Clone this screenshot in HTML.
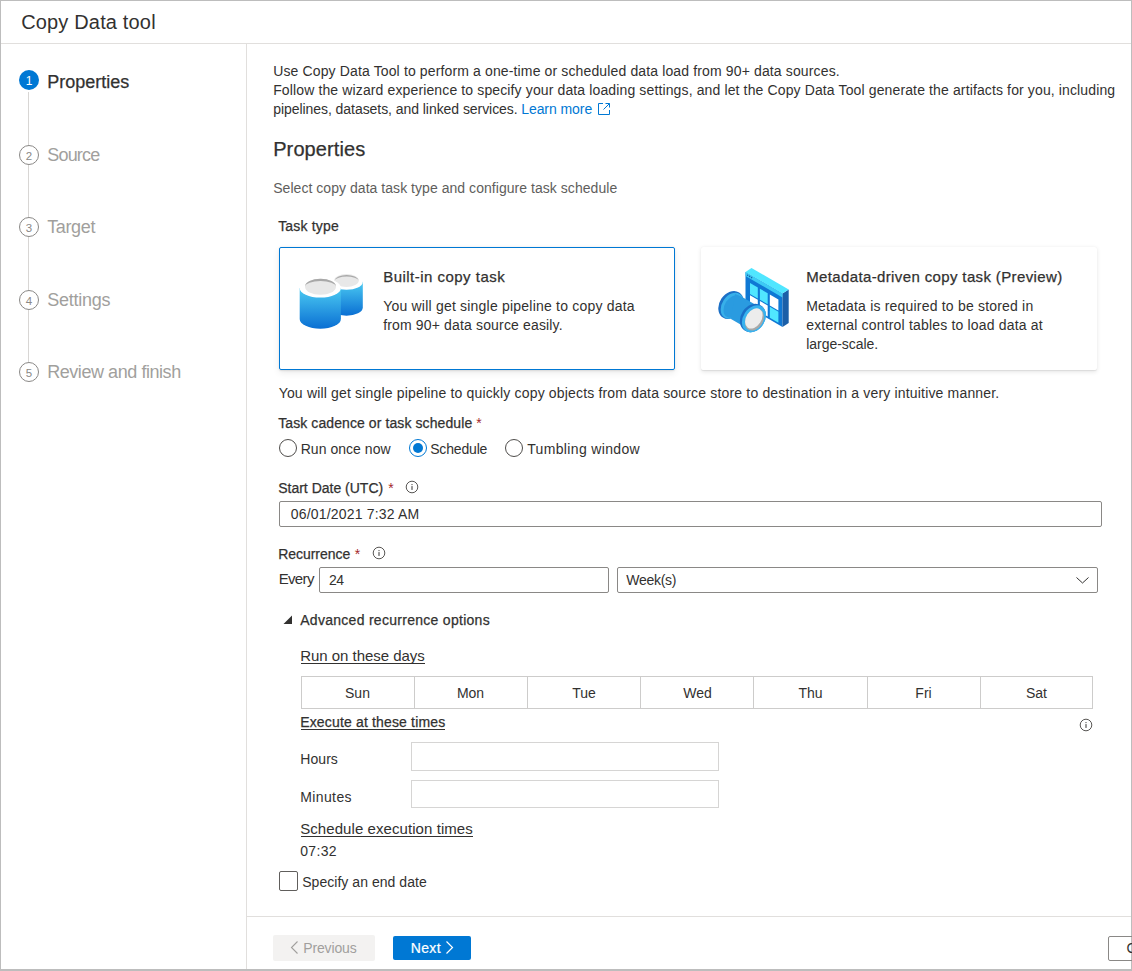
<!DOCTYPE html>
<html><head><meta charset="utf-8">
<style>
html,body{margin:0;padding:0;}
body{width:1132px;height:971px;position:relative;overflow:hidden;background:#fff;font-family:"Liberation Sans",sans-serif;color:#323130;}
.t{position:absolute;white-space:nowrap;line-height:1;}
.abs{position:absolute;box-sizing:border-box;}
.day{position:absolute;top:676px;height:33px;box-sizing:border-box;display:flex;align-items:center;justify-content:center;font-size:14px;color:#323130;}
</style></head><body>
<!-- frame -->
<div class="abs" style="left:0;top:0;width:1px;height:971px;background:#bdbdbd"></div>
<div class="abs" style="left:0;top:0;width:1132px;height:1px;background:#bdbdbd"></div>
<div class="abs" style="left:1131px;top:0;width:1px;height:971px;background:#bdbdbd"></div>
<div class="abs" style="left:0;top:969px;width:1132px;height:2px;background:#bdbdbd"></div>
<!-- header border -->
<div class="abs" style="left:1px;top:43px;width:1130px;height:1px;background:#e1dfdd"></div>
<!-- nav divider -->
<div class="abs" style="left:246px;top:44px;width:1px;height:925px;background:#e1dfdd"></div>
<!-- nav steps -->
<div class="abs" style="left:28px;top:92px;width:1px;height:270px;background:#d8d6d4"></div>
<div class="abs" style="left:19px;top:70px;width:20px;height:20px;border-radius:50%;background:#0078d4;color:#fff;font-size:12px;line-height:22px;text-align:center">1</div>
<div class="abs" style="left:19px;top:145px;width:20px;height:20px;border-radius:50%;background:#fff;border:1px solid #8a8886;color:#8a8886;font-size:11.5px;line-height:21px;text-align:center">2</div>
<div class="abs" style="left:19px;top:217px;width:20px;height:20px;border-radius:50%;background:#fff;border:1px solid #8a8886;color:#8a8886;font-size:11.5px;line-height:21px;text-align:center">3</div>
<div class="abs" style="left:19px;top:290px;width:20px;height:20px;border-radius:50%;background:#fff;border:1px solid #8a8886;color:#8a8886;font-size:11.5px;line-height:21px;text-align:center">4</div>
<div class="abs" style="left:19px;top:362px;width:20px;height:20px;border-radius:50%;background:#fff;border:1px solid #8a8886;color:#8a8886;font-size:11.5px;line-height:21px;text-align:center">5</div>

<!-- learn more icon -->
<svg class="abs" style="left:597px;top:102px" width="14" height="14" viewBox="0 0 14 14"><path d="M6 1.5H1.5V12.5H12.5V8" fill="none" stroke="#0078d4" stroke-width="1"/><path d="M8.5 1.5H12.5V5.5M12.5 1.5L6.5 7.5" fill="none" stroke="#0078d4" stroke-width="1"/></svg>

<!-- cards -->
<div class="abs" style="left:279px;top:247px;width:396px;height:123px;border:1px solid #0078d4;border-radius:2px;box-shadow:0 0.6px 1.8px rgba(0,0,0,.10),0 3px 7px rgba(0,0,0,.08)"></div>
<div class="abs" style="left:701px;top:247px;width:396px;height:123px;border-radius:2px;box-shadow:0 0.3px 0.9px rgba(0,0,0,.07),0 1.6px 4px rgba(0,0,0,.10)"></div>
<svg class="abs" style="left:296px;top:270px" width="70" height="62" viewBox="0 0 70 62">
<defs><linearGradient id="cg" x1="0" y1="0" x2="0" y2="1"><stop offset="0" stop-color="#4ccbf2"/><stop offset="1" stop-color="#0a6fd3"/></linearGradient>
<linearGradient id="cg2" x1="0" y1="0" x2="0" y2="1"><stop offset="0" stop-color="#4ccbf2"/><stop offset="1" stop-color="#0a6fd3"/></linearGradient></defs>
<path d="M34.2 11.65 V37.5 A16.3 8.15 0 0 0 66.8 37.5 V11.65 Z" fill="url(#cg2)"/>
<ellipse cx="50.5" cy="11.65" rx="16.3" ry="8.15" fill="#fff"/>
<ellipse cx="50.5" cy="10.5" rx="12.3" ry="6.5" fill="#e8e8e8"/>
<path d="M38.5 10.5 A12.3 6.5 0 0 1 62.8 10.5 A12.3 4.6 0 0 0 38.5 10.5 Z" fill="#a8a8a8"/>
<path d="M3.7 17.9 V49 A20.6 9.7 0 0 0 44.9 49 V17.9 Z" fill="url(#cg)"/>
<ellipse cx="24.3" cy="17.9" rx="20.6" ry="9.7" fill="#fff"/>
<ellipse cx="24.5" cy="16.75" rx="15.5" ry="8.1" fill="#e8e8e8"/>
<path d="M9 16.75 A15.5 8.1 0 0 1 40 16.75 A15.5 5.8 0 0 0 9 16.75 Z" fill="#a8a8a8"/>
</svg>
<svg class="abs" style="left:716px;top:264px" width="76" height="72" viewBox="0 0 76 72">
<path d="M29.5 8 L66.5 29.5 L66.5 63 L29.5 41.5 Z" fill="#0f78d4"/>
<path d="M66.5 29.5 L72.7 25.5 L72.7 59 L66.5 63 Z" fill="#1b5fa8"/>
<path d="M29.5 8 L35.5 4 L72.7 25.5 L66.5 29.5 Z" fill="#50e6ff"/>
<path d="M29.5 8 L66.5 29.5 L66.5 33.5 L29.5 12 Z" fill="#3ccaf4"/>
<circle cx="31.6" cy="11.2" r="0.8" fill="#1b5fa8"/><circle cx="33.6" cy="12.4" r="0.8" fill="#1b5fa8"/><circle cx="35.6" cy="13.6" r="0.8" fill="#1b5fa8"/>
<path d="M34 19 L41.8 23.5 L41.8 34.5 L34 30 Z" fill="#50e6ff"/>
<path d="M43.9 24.7 L51.7 29.2 L51.7 40.2 L43.9 35.7 Z" fill="#50e6ff"/>
<path d="M53.8 30.4 L62.4 35.4 L62.4 46.4 L53.8 41.4 Z" fill="#ffffff"/>
<path d="M34 31.3 L41.8 35.8 L41.8 46.8 L34 42.3 Z" fill="#ffffff"/>
<path d="M43.9 37 L51.7 41.5 L51.7 52.5 L43.9 48 Z" fill="#ffffff"/>
<path d="M53.8 42.7 L62.4 47.7 L62.4 58.7 L53.8 53.7 Z" fill="#50e6ff"/>
<g transform="rotate(33 15 41)"><ellipse cx="15" cy="41" rx="11.6" ry="15" fill="#1b6fc6"/><ellipse cx="16.4" cy="41" rx="10.2" ry="14" fill="#38b0ea"/><ellipse cx="17.6" cy="41" rx="8.4" ry="12.2" fill="#2a9be0"/></g>
<path d="M19 30 L27 33.6 L40 41 L35 67 L25.8 61.2 L15 55 Z" fill="#2a9be0"/>
<g transform="rotate(33 36.8 54)"><ellipse cx="36.8" cy="54" rx="12" ry="15" fill="#1b6fc6"/><ellipse cx="38.2" cy="54" rx="10.8" ry="14.6" fill="#38b2ee"/><ellipse cx="39.2" cy="54.6" rx="8.4" ry="11.6" fill="#a8a8a8"/><ellipse cx="37.9" cy="53.8" rx="7.6" ry="11" fill="#ececec"/></g>
</svg>

<!-- radios -->
<div class="abs" style="left:279px;top:439px;width:18px;height:18px;border-radius:50%;border:1px solid #4f4d4b"></div>
<div class="abs" style="left:408.5px;top:439px;width:18px;height:18px;border-radius:50%;border:1px solid #0078d4"></div>
<div class="abs" style="left:412.5px;top:443px;width:10px;height:10px;border-radius:50%;background:#0078d4"></div>
<div class="abs" style="left:505px;top:439px;width:18px;height:18px;border-radius:50%;border:1px solid #4f4d4b"></div>

<!-- info icons -->
<svg class="abs" style="left:405px;top:480px" width="14" height="14" viewBox="0 0 14 14"><circle cx="7" cy="7" r="5.8" fill="none" stroke="#4f4d4b" stroke-width="0.95"/><path d="M7 6.1v3.8" stroke="#323130" stroke-width="1"/><circle cx="7" cy="4.6" r="0.6" fill="#323130"/></svg>
<svg class="abs" style="left:372px;top:546px" width="14" height="14" viewBox="0 0 14 14"><circle cx="7" cy="7" r="5.8" fill="none" stroke="#4f4d4b" stroke-width="0.95"/><path d="M7 6.1v3.8" stroke="#323130" stroke-width="1"/><circle cx="7" cy="4.6" r="0.6" fill="#323130"/></svg>
<svg class="abs" style="left:1078.5px;top:718px" width="14" height="14" viewBox="0 0 14 14"><circle cx="7" cy="7" r="5.8" fill="none" stroke="#4f4d4b" stroke-width="0.95"/><path d="M7 6.1v3.8" stroke="#323130" stroke-width="1"/><circle cx="7" cy="4.6" r="0.6" fill="#323130"/></svg>

<!-- inputs -->
<div class="abs" style="left:279px;top:501px;width:823px;height:26px;border:1px solid #8a8886;border-radius:2px"></div>
<div class="abs" style="left:319px;top:567px;width:290px;height:26px;border:1px solid #8a8886;border-radius:2px"></div>
<div class="abs" style="left:617px;top:567px;width:481px;height:26px;border:1px solid #8a8886;border-radius:2px"></div>
<svg class="abs" style="left:1075px;top:575px" width="16" height="10" viewBox="0 0 16 10"><path d="M1.5 2.5 L7.5 8 L13.5 2.5" fill="none" stroke="#323130" stroke-width="1"/></svg>
<!-- triangle -->
<svg class="abs" style="left:283px;top:615px" width="10" height="10" viewBox="0 0 10 10"><path d="M0.5 9 L9 0.5 L9 9 Z" fill="#323130"/></svg>
<!-- underlines -->
<div class="abs" style="left:301px;top:663px;width:124px;height:1px;background:#323130"></div>
<div class="abs" style="left:301px;top:729px;width:144px;height:1px;background:#323130"></div>
<div class="abs" style="left:301px;top:836px;width:172px;height:1px;background:#323130"></div>
<!-- days table -->
<div class="abs" style="left:301px;top:676px;width:792px;height:33px;border:1px solid #cdcccb"></div>
<div class="abs" style="left:414px;top:676px;width:1px;height:33px;background:#cdcccb"></div>
<div class="abs" style="left:527px;top:676px;width:1px;height:33px;background:#cdcccb"></div>
<div class="abs" style="left:640px;top:676px;width:1px;height:33px;background:#cdcccb"></div>
<div class="abs" style="left:753px;top:676px;width:1px;height:33px;background:#cdcccb"></div>
<div class="abs" style="left:867px;top:676px;width:1px;height:33px;background:#cdcccb"></div>
<div class="abs" style="left:980px;top:676px;width:1px;height:33px;background:#cdcccb"></div>
<div class="day" style="left:301px;width:113px"><span>Sun</span></div><div class="day" style="left:414px;width:113px"><span>Mon</span></div><div class="day" style="left:527px;width:114px"><span>Tue</span></div><div class="day" style="left:641px;width:113px"><span>Wed</span></div><div class="day" style="left:754px;width:113px"><span>Thu</span></div><div class="day" style="left:867px;width:113px"><span>Fri</span></div><div class="day" style="left:980px;width:113px"><span>Sat</span></div>
<!-- hours/minutes inputs -->
<div class="abs" style="left:411px;top:742px;width:308px;height:29px;border:1px solid #d6d5d4"></div>
<div class="abs" style="left:411px;top:780px;width:308px;height:28px;border:1px solid #d6d5d4"></div>
<!-- checkbox -->
<div class="abs" style="left:279px;top:871px;width:19px;height:20px;border:1px solid #605e5c;border-radius:2px"></div>
<!-- footer -->
<div class="abs" style="left:247px;top:916px;width:884px;height:1px;background:#e1dfdd"></div>
<div class="abs" style="left:273px;top:935px;width:102px;height:26px;background:#f3f2f1;border-radius:2px"></div>
<svg class="abs" style="left:289px;top:940px" width="12" height="16" viewBox="0 0 12 16"><path d="M8.5 1.5 L2.5 7.5 L8.5 13.5" fill="none" stroke="#a19f9d" stroke-width="1.1"/></svg>
<div class="abs" style="left:393px;top:936px;width:78px;height:24px;background:#0078d4;border-radius:2px"></div>
<svg class="abs" style="left:444px;top:940px" width="12" height="16" viewBox="0 0 12 16"><path d="M2.5 1.5 L8.5 7.5 L2.5 13.5" fill="none" stroke="#fff" stroke-width="1.2"/></svg>
<div class="abs" style="left:1108px;top:936px;width:40px;height:25px;border:1px solid #8a8886;border-radius:2px"></div>
<div class="t" style="left:1126.5px;top:940.5px;font-size:14px;">C</div>
<div class="t" style="left:21.2px;top:12.07px;font-size:20px;font-weight:400;color:#323130;letter-spacing:0.162px;">Copy Data tool</div>
<div class="t" style="left:47.2px;top:72.76px;font-size:18px;-webkit-text-stroke:0.25px #323130;color:#323130;letter-spacing:-0.005px;">Properties</div>
<div class="t" style="left:47.2px;top:145.76px;font-size:18px;font-weight:400;color:#a19f9d;letter-spacing:-0.789px;">Source</div>
<div class="t" style="left:47.2px;top:217.76px;font-size:18px;font-weight:400;color:#a19f9d;letter-spacing:-0.366px;">Target</div>
<div class="t" style="left:47.2px;top:290.76px;font-size:18px;font-weight:400;color:#a19f9d;letter-spacing:-0.264px;">Settings</div>
<div class="t" style="left:47.2px;top:362.76px;font-size:18px;font-weight:400;color:#a19f9d;letter-spacing:-0.442px;">Review and finish</div>
<div class="t" style="left:273.2px;top:64.15px;font-size:14px;font-weight:400;color:#323130;letter-spacing:0.135px;">Use Copy Data Tool to perform a one-time or scheduled data load from 90+ data sources.</div>
<div class="t" style="left:273.2px;top:83.15px;font-size:14px;font-weight:400;color:#323130;letter-spacing:0.128px;">Follow the wizard experience to specify your data loading settings, and let the Copy Data Tool generate the artifacts for you, including</div>
<div class="t" style="left:273.2px;top:102.15px;font-size:14px;font-weight:400;color:#323130;letter-spacing:-0.055px;">pipelines, datasets, and linked services.</div>
<div class="t" style="left:521.2px;top:102.15px;font-size:14px;font-weight:400;color:#0078d4;letter-spacing:-0.066px;">Learn more</div>
<div class="t" style="left:273.2px;top:139.07px;font-size:20px;-webkit-text-stroke:0.25px #323130;color:#323130;letter-spacing:0.094px;">Properties</div>
<div class="t" style="left:273.2px;top:181.15px;font-size:14px;font-weight:400;color:#605e5c;letter-spacing:0.044px;">Select copy data task type and configure task schedule</div>
<div class="t" style="left:278.2px;top:219.15px;font-size:14px;-webkit-text-stroke:0.25px #323130;color:#323130;letter-spacing:0.170px;">Task type</div>
<div class="t" style="left:383.2px;top:269.30px;font-size:15px;-webkit-text-stroke:0.25px #323130;color:#323130;letter-spacing:0.477px;">Built-in copy task</div>
<div class="t" style="left:383.2px;top:299.15px;font-size:14px;font-weight:400;color:#323130;letter-spacing:0.208px;">You will get single pipeline to copy data</div>
<div class="t" style="left:383.2px;top:318.15px;font-size:14px;font-weight:400;color:#323130;letter-spacing:0.155px;">from 90+ data source easily.</div>
<div class="t" style="left:806.2px;top:269.30px;font-size:15px;-webkit-text-stroke:0.25px #323130;color:#323130;letter-spacing:0.369px;">Metadata-driven copy task (Preview)</div>
<div class="t" style="left:806.2px;top:299.15px;font-size:14px;font-weight:400;color:#323130;letter-spacing:0.193px;">Metadata is required to be stored in</div>
<div class="t" style="left:806.2px;top:318.15px;font-size:14px;font-weight:400;color:#323130;letter-spacing:0.182px;">external control tables to load data at</div>
<div class="t" style="left:806.2px;top:337.15px;font-size:14px;font-weight:400;color:#323130;letter-spacing:-0.034px;">large-scale.</div>
<div class="t" style="left:278.7px;top:386.15px;font-size:14px;font-weight:400;color:#323130;letter-spacing:0.170px;">You will get single pipeline to quickly copy objects from data source store to destination in a very intuitive manner.</div>
<div class="t" style="left:278.2px;top:416.15px;font-size:14px;-webkit-text-stroke:0.25px #323130;color:#323130;letter-spacing:0.091px;">Task cadence or task schedule</div>
<div class="t" style="left:476.2px;top:416.15px;font-size:14px;font-weight:400;color:#a4262c;letter-spacing:0.000px;">*</div>
<div class="t" style="left:300.7px;top:442.15px;font-size:14px;font-weight:400;color:#323130;letter-spacing:0.035px;">Run once now</div>
<div class="t" style="left:430.2px;top:442.15px;font-size:14px;font-weight:400;color:#323130;letter-spacing:-0.170px;">Schedule</div>
<div class="t" style="left:527.2px;top:442.15px;font-size:14px;font-weight:400;color:#323130;letter-spacing:0.347px;">Tumbling window</div>
<div class="t" style="left:278.2px;top:481.15px;font-size:14px;-webkit-text-stroke:0.25px #323130;color:#323130;letter-spacing:-0.001px;">Start Date (UTC)</div>
<div class="t" style="left:388.2px;top:481.15px;font-size:14px;font-weight:400;color:#a4262c;letter-spacing:0.000px;">*</div>
<div class="t" style="left:290.8px;top:507.15px;font-size:14px;font-weight:400;color:#323130;letter-spacing:0.181px;">06/01/2021 7:32 AM</div>
<div class="t" style="left:278.2px;top:547.15px;font-size:14px;-webkit-text-stroke:0.25px #323130;color:#323130;letter-spacing:-0.042px;">Recurrence</div>
<div class="t" style="left:354.7px;top:547.15px;font-size:14px;font-weight:400;color:#a4262c;letter-spacing:0.000px;">*</div>
<div class="t" style="left:278.7px;top:571.30px;font-size:15px;font-weight:400;color:#323130;letter-spacing:-0.661px;">Every</div>
<div class="t" style="left:328.9px;top:573.15px;font-size:14px;font-weight:400;color:#323130;letter-spacing:-0.478px;">24</div>
<div class="t" style="left:626.2px;top:573.15px;font-size:14px;font-weight:400;color:#323130;letter-spacing:-0.260px;">Week(s)</div>
<div class="t" style="left:300.2px;top:613.15px;font-size:14px;-webkit-text-stroke:0.25px #323130;color:#323130;letter-spacing:0.284px;">Advanced recurrence options</div>
<div class="t" style="left:300.2px;top:648.30px;font-size:15px;font-weight:400;color:#323130;letter-spacing:-0.031px;">Run on these days</div>
<div class="t" style="left:300.2px;top:715.15px;font-size:14px;-webkit-text-stroke:0.25px #323130;color:#323130;letter-spacing:0.160px;">Execute at these times</div>
<div class="t" style="left:300.2px;top:752.15px;font-size:14px;font-weight:400;color:#323130;letter-spacing:0.085px;">Hours</div>
<div class="t" style="left:300.2px;top:790.15px;font-size:14px;font-weight:400;color:#323130;letter-spacing:0.395px;">Minutes</div>
<div class="t" style="left:300.2px;top:821.30px;font-size:15px;font-weight:400;color:#323130;letter-spacing:0.072px;">Schedule execution times</div>
<div class="t" style="left:300.2px;top:844.15px;font-size:14px;font-weight:400;color:#323130;letter-spacing:0.338px;">07:32</div>
<div class="t" style="left:302.2px;top:875.15px;font-size:14px;font-weight:400;color:#323130;letter-spacing:0.041px;">Specify an end date</div>
<div class="t" style="left:303.2px;top:941.15px;font-size:14px;font-weight:400;color:#a19f9d;letter-spacing:-0.138px;">Previous</div>
<div class="t" style="left:410.8px;top:941.15px;font-size:14px;-webkit-text-stroke:0.22px #ffffff;color:#ffffff;letter-spacing:0.334px;">Next</div>
</body></html>
